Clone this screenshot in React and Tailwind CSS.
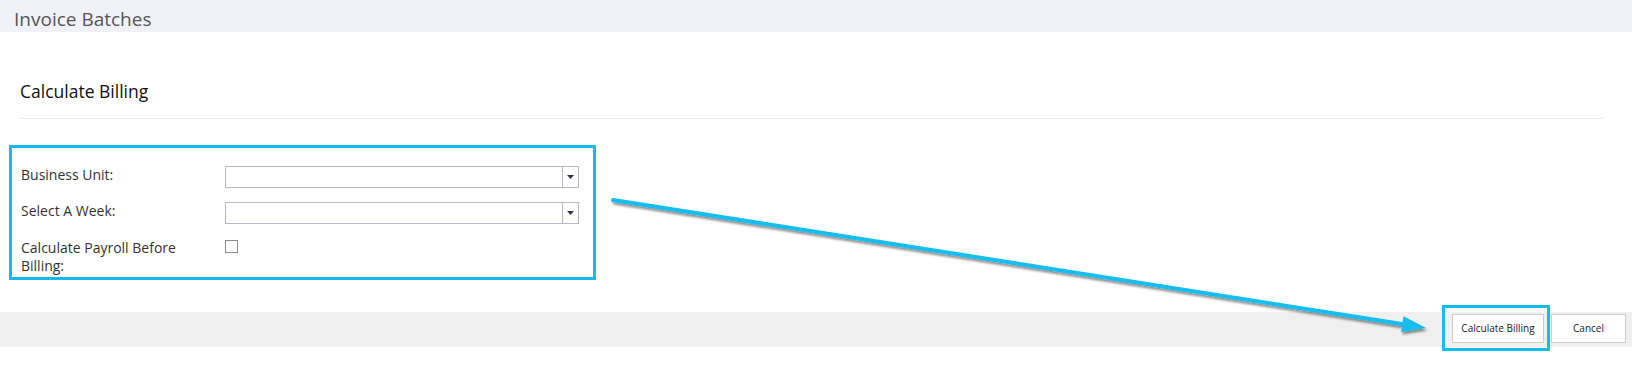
import React from "react";

function Select() {
  return (
    <div className="flex h-[22px] w-[354px] border border-[#b5b8c8] bg-white">
      <div className="flex-1" />
      <div className="flex w-[16px] items-center justify-center border-l border-[#b5b8c8]">
        <svg width="7" height="4" viewBox="0 0 7 4">
          <path d="M0 0 L7 0 L3.5 4 Z" fill="#333" />
        </svg>
      </div>
    </div>
  );
}

export default function App() {
  return (
    <div
      className="relative h-[380px] w-full overflow-hidden bg-white"
      style={{ fontFamily: '"Open Sans", "Noto Sans", sans-serif' }}
    >
      {/* header */}
      <div className="h-[32px] bg-[#f1f2f7] pl-[14px] pt-[10px]">
        <div className="text-[19px] leading-none text-[#555]">Invoice Batches</div>
      </div>

      {/* title */}
      <div className="pl-[20px] pt-[51px] text-[17.5px] leading-none text-[#111]">
        Calculate Billing
      </div>
      <div className="ml-[20px] mr-[29px] mt-[17px] h-px bg-[#e9e9e9]" />

      {/* form */}
      <div className="ml-[9px] mt-[26px] w-[587px] border-[3px] border-[#12bdee] pb-[2px] pl-[9px] pt-[18px] text-[14px] leading-[18px] text-[#333]">
        <div className="flex h-[36px] items-start">
          <div className="w-[204px]">Business Unit:</div>
          <Select />
        </div>
        <div className="flex h-[37px] items-start">
          <div className="w-[204px]">Select A Week:</div>
          <Select />
        </div>
        <div className="flex h-[36px] items-start">
          <div className="w-[204px]">
            <div className="w-[165px]">Calculate Payroll Before Billing:</div>
          </div>
          <div className="mt-px h-[13px] w-[13px] border border-[#8a8a8a] bg-white" />
        </div>
      </div>

      {/* footer */}
      <div className="mt-[32px] flex h-[35px] justify-end gap-[7px] bg-[#f0f0f0] pr-[6px] pt-[2px]">
        <button className="h-[29px] w-[92px] border border-[#cccccc] bg-white text-[10px] text-[#222]">
          Calculate Billing
        </button>
        <button className="h-[29px] w-[75px] border border-[#cccccc] bg-white text-[10px] text-[#222]">
          Cancel
        </button>
      </div>

      {/* annotation: box around button */}
      <div className="absolute left-[1442px] top-[305px] h-[46px] w-[108px] border-[3px] border-[#12bdee]" />

      {/* annotation: arrow */}
      <svg
        className="pointer-events-none absolute left-0 top-0"
        width="1632"
        height="380"
        viewBox="0 0 1632 380"
      >
        <defs>
          <filter id="sh" x="-5%" y="-50%" width="110%" height="200%">
            <feDropShadow dx="1.5" dy="2.5" stdDeviation="1.2" floodColor="#000" floodOpacity="0.45" />
          </filter>
        </defs>
        <g filter="url(#sh)">
          <line x1="613" y1="200" x2="1405" y2="324.5" stroke="#12bdee" strokeWidth="4" strokeLinecap="round" />
          <polygon points="1426,328 1403.5,316.3 1401,332.1" fill="#12bdee" />
        </g>
      </svg>
    </div>
  );
}
